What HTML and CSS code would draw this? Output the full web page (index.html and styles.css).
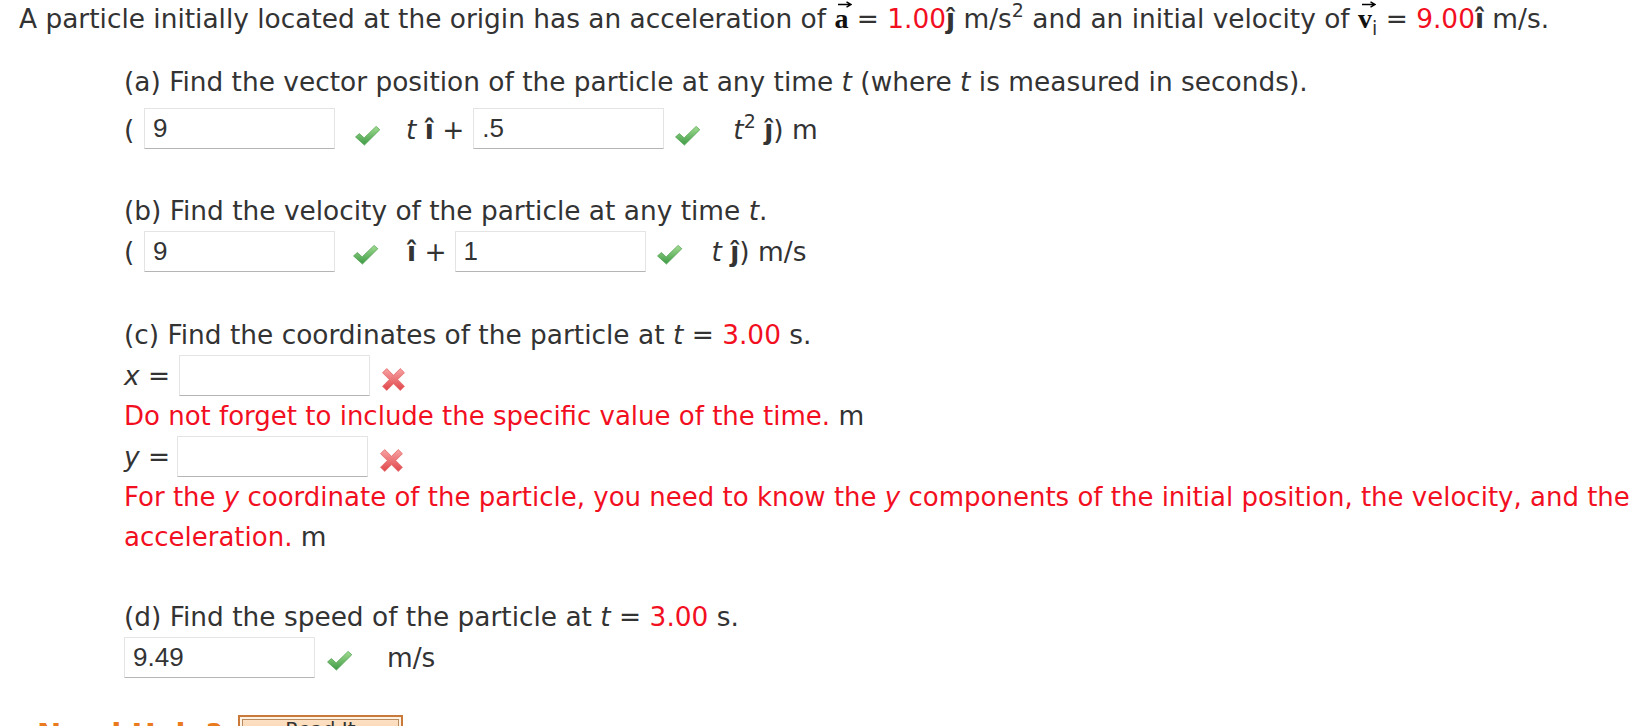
FILE: index.html
```html
<!DOCTYPE html>
<html>
<head>
<meta charset="utf-8">
<link rel="stylesheet" href="styles.css">
</head>
<body>
<div class="page">
  <p class="intro">A particle initially located at the origin has an acceleration of <span class="vec">a<svg class="arrow" viewBox="0 0 14 7"><path d="M0 3.5H12M8.5 0.8L13 3.5L8.5 6.2" fill="none" stroke="#000" stroke-width="1.4"/></svg></span> = <span class="red">1.00</span><b class="hat">ĵ</b> m/s<sup>2</sup> and an initial velocity of <span class="vec">v<svg class="arrow" viewBox="0 0 14 7"><path d="M0 3.5H12M8.5 0.8L13 3.5L8.5 6.2" fill="none" stroke="#000" stroke-width="1.4"/></svg></span><sub>i</sub> = <span class="red">9.00</span><b class="hat">î</b> m/s.</p>

  <div class="parts">
    <section class="part">
      <div class="line">(a) Find the vector position of the particle at any time <i>t</i> (where <i>t</i> is measured in seconds).</div>
      <div class="row tall">
        <span class="paren">(</span>
        <input class="field" value="9" readonly>
        <svg class="check c-wide" viewBox="0 0 28 24"><defs><linearGradient id="g1" x1="0" y1="0" x2="0" y2="1"><stop offset="0" stop-color="#a3dd92"/><stop offset="1" stop-color="#3d9a45"/></linearGradient></defs><path d="M1.5 13.5L5.5 10L10.5 14.5L23 2.5L26.8 6L10.8 22Z" fill="url(#g1)" stroke="#4f9f4f" stroke-width="0.8" stroke-linejoin="round"/></svg>
        <span class="unit u-a1"><i>t</i> <b class="hat">î</b> +</span>
        <input class="field" value=".5" readonly>
        <svg class="check" viewBox="0 0 28 24"><path d="M1.5 13.5L5.5 10L10.5 14.5L23 2.5L26.8 6L10.8 22Z" fill="url(#g1)" stroke="#4f9f4f" stroke-width="0.8" stroke-linejoin="round"/></svg>
        <span class="unit u-a2"><i>t</i><sup>2</sup> <b class="hat">ĵ</b>) m</span>
      </div>
    </section>

    <section class="part">
      <div class="line">(b) Find the velocity of the particle at any time <i>t</i>.</div>
      <div class="row">
        <span class="paren">(</span>
        <input class="field" value="9" readonly>
        <svg class="check c-mid" viewBox="0 0 28 24"><path d="M1.5 13.5L5.5 10L10.5 14.5L23 2.5L26.8 6L10.8 22Z" fill="url(#g1)" stroke="#4f9f4f" stroke-width="0.8" stroke-linejoin="round"/></svg>
        <span class="unit u-b1"><b class="hat">î</b> +</span>
        <input class="field" value="1" readonly>
        <svg class="check" viewBox="0 0 28 24"><path d="M1.5 13.5L5.5 10L10.5 14.5L23 2.5L26.8 6L10.8 22Z" fill="url(#g1)" stroke="#4f9f4f" stroke-width="0.8" stroke-linejoin="round"/></svg>
        <span class="unit u-b2"><i>t</i> <b class="hat">ĵ</b>) m/s</span>
      </div>
    </section>

    <section class="part part-c">
      <div class="line">(c) Find the coordinates of the particle at <i>t</i> = <span class="red">3.00</span> s.</div>
      <div class="row">
        <span class="label"><i>x</i> =</span>
        <input class="field" value="" readonly>
        <svg class="cross" viewBox="0 0 24 24"><defs><linearGradient id="g2" x1="0" y1="0" x2="0" y2="1"><stop offset="0" stop-color="#f7a3a3"/><stop offset="1" stop-color="#e0464a"/></linearGradient></defs><path d="M1.5 5.5L5.5 1.5L12 8L18.5 1.5L22.5 5.5L16 12L22.5 18.5L18.5 22.5L12 16L5.5 22.5L1.5 18.5L8 12Z" fill="url(#g2)" stroke="#e56a6a" stroke-width="0.8" stroke-linejoin="round"/></svg>
      </div>
      <div class="line"><span class="red fb">Do not forget to include the specific value of the time.</span> m</div>
      <div class="row">
        <span class="label label-y"><i>y</i> =</span>
        <input class="field" value="" readonly>
        <svg class="cross" viewBox="0 0 24 24"><path d="M1.5 5.5L5.5 1.5L12 8L18.5 1.5L22.5 5.5L16 12L22.5 18.5L18.5 22.5L12 16L5.5 22.5L1.5 18.5L8 12Z" fill="url(#g2)" stroke="#e56a6a" stroke-width="0.8" stroke-linejoin="round"/></svg>
      </div>
      <div class="line wrap"><span class="red fb">For the <i>y</i> coordinate of the particle, you need to know the <i>y</i> components of the initial position, the velocity, and the acceleration.</span> m</div>
    </section>

    <section class="part">
      <div class="line">(d) Find the speed of the particle at <i>t</i> = <span class="red">3.00</span> s.</div>
      <div class="row">
        <input class="field" value="9.49" readonly>
        <svg class="check c-d" viewBox="0 0 28 24"><path d="M1.5 13.5L5.5 10L10.5 14.5L23 2.5L26.8 6L10.8 22Z" fill="url(#g1)" stroke="#4f9f4f" stroke-width="0.8" stroke-linejoin="round"/></svg>
        <span class="unit u-d">m/s</span>
      </div>
    </section>
  </div>

  <div class="help">
    <span class="help-label">Need Help?</span>
    <span class="help-btn">Read It</span>
  </div>
</div>
</body>
</html>
```

FILE: styles.css
```css
html, body {
  margin: 0;
  padding: 0;
  background: #fff;
}
body {
  font-family: "DejaVu Sans", Verdana, sans-serif;
  font-size: 26.4px;
  color: #333;
  overflow: hidden;
}
.page {
  padding: 0 0 0 19px;
}
.intro {
  margin: 0;
  line-height: 38px;
  white-space: nowrap;
}
.red { color: #f20f1f; }
.fb { font-size: 26px; }
.hat {
  font-family: "DejaVu Sans", sans-serif;
  font-weight: bold;
}
.vec {
  position: relative;
  font-family: "Liberation Serif", serif;
  font-weight: bold;
  font-size: 28px;
  color: #111;
}
.vec .arrow {
  position: absolute;
  left: 4px;
  top: -2px;
  width: 14px;
  height: 7px;
}
sup {
  font-size: 19px;
  vertical-align: 11px;
  line-height: 0;
}
sub {
  font-size: 19px;
  vertical-align: -7px;
  line-height: 0;
}
.parts {
  padding-left: 105px;
  padding-top: 24px;
  display: flex;
  flex-direction: column;
  gap: 41px;
}
.part {
  display: flex;
  flex-direction: column;
}
.part-c {
  margin-top: 2px;
  margin-bottom: -1px;
}
.line {
  line-height: 40px;
  white-space: nowrap;
}
.line.wrap {
  white-space: normal;
  padding-right: 12px;
}
.row {
  display: flex;
  align-items: center;
  height: 41px;
}
.row.tall {
  height: 48px;
  padding-top: 6px;
  box-sizing: border-box;
  align-items: flex-start;
}
.paren {
  width: 20px;
  align-self: center;
}
.row.tall .paren,
.row.tall .unit {
  align-self: center;
}
.label {
  width: 55px;
}
.label-y {
  width: 53px;
}
.field {
  box-sizing: border-box;
  width: 191px;
  height: 41px;
  border: 1px solid #e4e4e4;
  border-bottom-color: #b5b5b5;
  border-radius: 1px;
  padding: 0 8px;
  font-family: "Liberation Sans", Arial, sans-serif;
  font-size: 26px;
  color: #333;
  background: #fff;
  outline: none;
  flex: none;
}
.check {
  width: 27px;
  height: 23px;
  margin-left: 10px;
  margin-top: 6px;
  flex: none;
}
.row.tall .check {
  align-self: center;
  margin-top: 13px;
}
.check.c-wide { margin-left: 19px; }
.check.c-mid { margin-left: 17px; }
.check.c-d { margin-left: 11px; }
.cross {
  width: 25px;
  height: 25px;
  margin-left: 11px;
  margin-top: 7px;
  flex: none;
}
.unit { white-space: nowrap; }
.u-a1 { margin-left: 25px; margin-right: 9px; }
.u-a2 { margin-left: 32px; }
.u-b1 { margin-left: 28px; margin-right: 8px; }
.u-b2 { margin-left: 29px; }
.u-d { margin-left: 34px; }
.help {
  margin-top: 37px;
  display: flex;
  align-items: flex-start;
  gap: 15px;
  padding-left: 18px;
}
.help-label {
  color: #ea7a1e;
  font-weight: bold;
  font-size: 29px;
  line-height: 33px;
  margin-top: 3px;
}
.help-btn {
  border: 2px solid #c97a3a;
  background: linear-gradient(#fde3c8, #f7c99b);
  color: #333;
  width: 165px;
  height: 34px;
  box-sizing: border-box;
  font-size: 20px;
  text-align: center;
  box-shadow: inset 0 0 0 2px #fff3e6, inset 0 0 0 3px #b98a5e;
}
```
